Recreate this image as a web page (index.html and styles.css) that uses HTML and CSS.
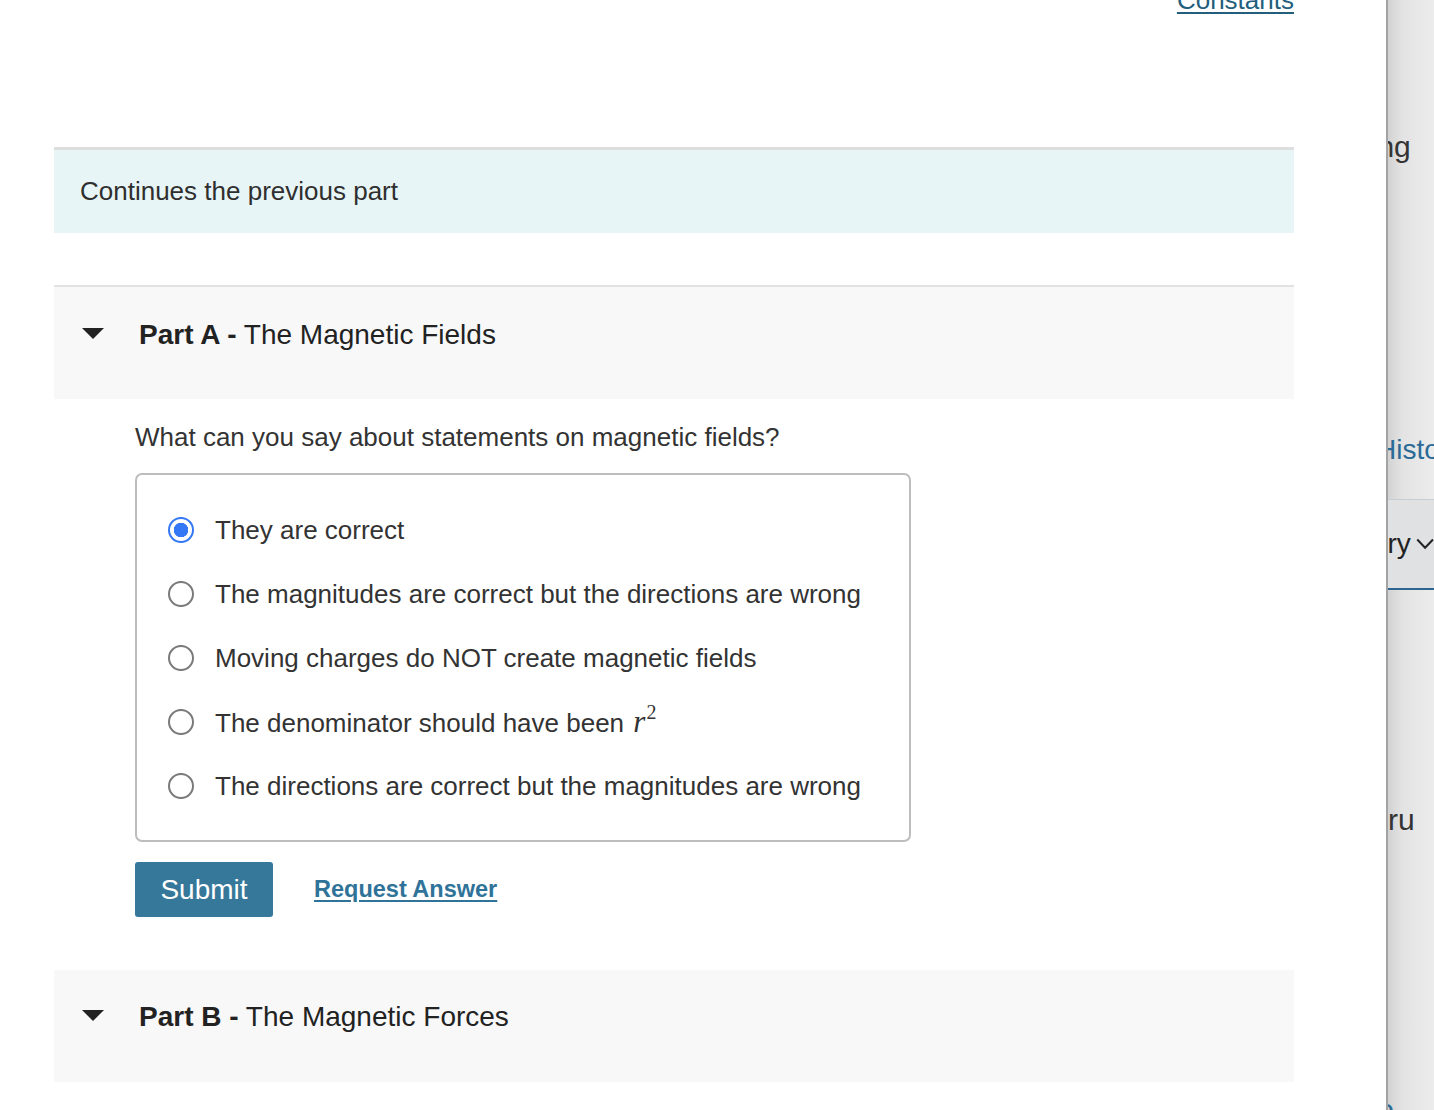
FILE: index.html
```html
<!DOCTYPE html>
<html lang="en">
<head>
    <meta charset="UTF-8">
    <meta name="viewport" content="width=device-width, initial-scale=1.0">
    <title>Part A - The Magnetic Fields</title>
    <link rel="stylesheet" href="styles.css">
</head>
<body>
    <div class="page">
        <main class="main">
            <div class="top-links">
                <a href="#" class="constants">Constants</a>
            </div>

            <div class="intro">Continues the previous part</div>

            <section class="part">
                <div class="part-head">
                    <span class="caret"></span>
                    <h2 class="part-title"><b>Part A -</b> The Magnetic Fields</h2>
                </div>
                <div class="part-body">
                    <p class="question">What can you say about statements on magnetic fields?</p>
                    <div class="choices">
                        <label class="choice"><input type="radio" name="partA" checked><span>They are correct</span></label>
                        <label class="choice"><input type="radio" name="partA"><span>The magnitudes are correct but the directions are wrong</span></label>
                        <label class="choice"><input type="radio" name="partA"><span>Moving charges do NOT create magnetic fields</span></label>
                        <label class="choice"><input type="radio" name="partA"><span>The denominator should have been <span class="math"><i>r</i><sup>2</sup></span></span></label>
                        <label class="choice"><input type="radio" name="partA"><span>The directions are correct but the magnitudes are wrong</span></label>
                    </div>
                    <div class="actions">
                        <button class="submit">Submit</button>
                        <a href="#" class="request">Request Answer</a>
                    </div>
                </div>
            </section>

            <section class="part part-b">
                <div class="part-head">
                    <span class="caret"></span>
                    <h2 class="part-title"><b>Part B -</b> The Magnetic Forces</h2>
                </div>
            </section>
        </main>

        <aside class="side">
            <div class="side-item side-learn">Learning</div>
            <a href="#" class="side-item side-history">History</a>
            <div class="side-tab"><span class="side-summary">Summary</span><svg class="chev" width="22" height="14" viewBox="0 0 22 14"><path d="M1.5 1.5 L11 11.5 L20.5 1.5" fill="none" stroke="#222" stroke-width="2.4"/></svg></div>
            <div class="side-item side-guru">Guru</div>
            <a href="#" class="side-item side-go">Go</a>
        </aside>
    </div>
</body>
</html>
```

FILE: styles.css
```css
* {
    margin: 0;
    padding: 0;
    box-sizing: border-box;
}

body {
    font-family: "Liberation Sans", Arial, sans-serif;
    color: #333;
    background: #fff;
    overflow: hidden;
}

.page {
    display: flex;
    width: 1434px;
    height: 1110px;
}

.main {
    width: 1386px;
    flex: none;
    padding-left: 54px;
    overflow: hidden;
}

.main > * {
    width: 1240px;
}

.top-links {
    margin-top: -15px;
    height: 30px;
    text-align: right;
    font-size: 26px;
    line-height: 30px;
}

.constants {
    color: #235f7c;
    text-decoration: underline;
    text-underline-offset: 3px;
    text-decoration-thickness: 2px;
}

.intro {
    margin-top: 132px;
    background: #e8f5f6;
    border-top: 3px solid #dedede;
    padding: 26px 26px 27px;
    font-size: 26px;
    line-height: 30px;
    color: #2f2f2f;
}

.part {
    margin-top: 52px;
}

.part-head {
    display: flex;
    align-items: center;
    background: #f8f8f8;
    border-top: 2px solid #e2e2e2;
    padding: 30px 0 46px 28px;
}

.caret {
    width: 0;
    height: 0;
    border-left: 11px solid transparent;
    border-right: 11px solid transparent;
    border-top: 11px solid #222;
    margin-right: 35px;
    margin-top: -4px;
}

.part-title {
    font-size: 28px;
    line-height: 36px;
    font-weight: normal;
    color: #222;
}

.part-title b {
    font-weight: bold;
}

.part-body {
    padding-left: 81px;
}

.question {
    margin-top: 23px;
    font-size: 26px;
    line-height: 30px;
}

.choices {
    width: 776px;
    margin-top: 21px;
    border: 2px solid #bdbdbd;
    border-radius: 7px;
    padding: 23px 0 22px 31px;
}

.choice {
    display: flex;
    align-items: center;
    height: 64px;
    font-size: 26px;
    color: #333;
    cursor: pointer;
}

.choice input {
    appearance: none;
    width: 26px;
    height: 26px;
    border: 2px solid #7a7a7a;
    border-radius: 50%;
    margin-right: 21px;
    flex: none;
    background: #fff;
}

.choice input:checked {
    border-color: #3478f6;
    background: radial-gradient(circle, #3478f6 0 7px, #fff 7.5px);
}

.math {
    font-family: "Liberation Serif", "Times New Roman", serif;
    margin-left: 2px;
}

.math i {
    font-size: 31px;
}

.math sup {
    font-size: 20px;
    vertical-align: 13px;
    line-height: 0;
    margin-left: 1px;
}

.actions {
    display: flex;
    align-items: center;
    gap: 41px;
    margin-top: 20px;
}

.submit {
    width: 138px;
    height: 55px;
    background: #36789a;
    color: #fff;
    border: none;
    border-radius: 3px;
    font-family: inherit;
    font-size: 28px;
    cursor: pointer;
}

.request {
    font-size: 23.5px;
    font-weight: bold;
    color: #2f7399;
    text-decoration: underline;
    text-underline-offset: 3px;
}

.part-b {
    margin-top: 53px;
}

.part-b .part-head {
    border-top-color: transparent;
    padding-top: 27px;
    padding-bottom: 47px;
}

/* right drawer, mostly hidden */
.side {
    flex: 1;
    height: 1110px;
    overflow: hidden;
    border-left: 2px solid #a3a3a3;
    background: linear-gradient(90deg, #d2d2d2 0, #e3e3e3 14px, #ececec 46px);
    display: flex;
    flex-direction: column;
    white-space: nowrap;
}

.side > * {
    flex: none;
}

.side-item {
    display: block;
    line-height: 36px;
    font-size: 30px;
    color: #333;
    text-decoration: none;
}

.side-learn {
    margin-top: 129px;
    margin-left: -94px;
}

.side-history {
    margin-top: 267px;
    margin-left: -12px;
    font-size: 28px;
    color: #2b6a96;
}

.side-tab {
    margin-top: 31px;
    height: 91px;
    border-top: 1px solid #c6cdd3;
    border-bottom: 2px solid #2d6491;
    background: #dfe1e3;
    display: flex;
    align-items: center;
    font-size: 28px;
    color: #222;
}

.side-summary {
    margin-left: -97px;
}

.chev {
    margin-left: 5px;
}

.side-guru {
    margin-top: 212px;
    margin-left: -40px;
}

.side-go {
    margin-top: 254px;
    margin-left: -34px;
    color: #2b6a96;
}
```
